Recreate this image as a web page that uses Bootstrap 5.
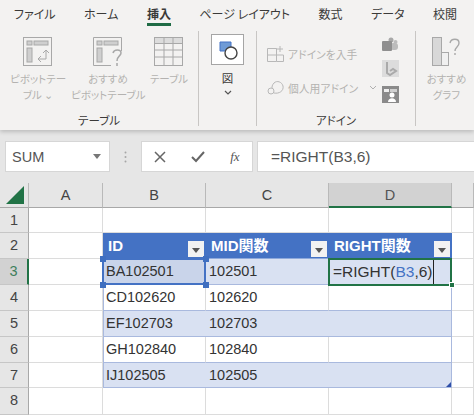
<!DOCTYPE html>
<html lang="ja">
<head>
<meta charset="utf-8">
<title>Excel</title>
<link rel="stylesheet" href="https://cdn.jsdelivr.net/npm/bootstrap@5.3.0/dist/css/bootstrap.min.css">
<style>
html,body{width:474px;height:415px;overflow:hidden;margin:0;background:#fff;}
body{font-family:"Liberation Sans","Noto Sans CJK JP",sans-serif;color:#333;}
.jp{font-family:"Noto Sans CJK JP",sans-serif;font-feature-settings:"palt";}
.ribbon{height:130px;background:#f3f2f1;box-shadow:0 2px 4px rgba(0,0,0,.18);position:relative;}
.tabs{height:27px;padding-left:14px;gap:28.5px;font-size:12px;color:#3b3a39;line-height:27px;white-space:nowrap;}
.tab-on{font-weight:700;position:relative;}
.tab-on::after{content:"";position:absolute;left:0;right:0;top:23px;height:3px;background:#1f6b45;}
.groups{height:103px;padding-top:4px;}
.rgroup{height:95px;border-right:1px solid #c8c6c4;position:relative;}
.g1{width:199px;}.g2{width:58px;}.g3{width:159px;}.g4{flex:1;border-right:0;}
.glabel{position:absolute;left:0;right:0;top:81px;text-align:center;font-size:11.5px;line-height:16px;color:#3b3a39;}
.bigbtn{position:absolute;top:6px;text-align:center;font-size:10.5px;line-height:16px;color:#b4b2b0;white-space:nowrap;}
.bigbtn svg{display:block;margin:0 auto 4px;}
.b1{left:3px;width:70px;}.b2{left:71px;width:74px;}.b3{left:141px;width:56px;}
.shapebox{position:absolute;left:12px;top:3px;width:33px;height:31px;background:#fff;border:1px solid #a5a5a5;}
.zu{position:absolute;left:12px;width:33px;top:39px;text-align:center;font-size:11.5px;line-height:16px;color:#3b3a39;}
.chev{position:absolute;left:25px;top:59px;}
.addrow{position:absolute;left:10px;font-size:10.8px;line-height:16px;color:#b4b2b0;white-space:nowrap;gap:3px;}
.addrow svg{flex:none;}
.ar1{top:14px;}.ar2{top:48px;}
.mini{position:absolute;left:125px;}
.m1{top:6px;}.m2{top:29px;}.m3{top:55px;}
.chart{position:absolute;left:2.5px;top:6px;width:56px;text-align:center;font-size:10.5px;line-height:16px;color:#b4b2b0;}
.chart svg{display:block;margin:0 0 4px 6px;}
.fbar{height:53px;background:#e6e6e6;padding:11px 0 0 5px;align-items:flex-start;}
.namebox{width:105px;height:31px;background:#fff;border:1px solid #d6d6d6;font-size:14.5px;color:#555;line-height:31px;padding-left:6px;position:relative;}
.namebox::after{content:"";position:absolute;right:8px;top:12px;border:4.5px solid transparent;border-top:5px solid #777;}
.dots{width:31px;height:31px;padding-left:14px;padding-top:10px;}
.fbtns{width:112px;height:31px;background:#fff;border:1px solid #d6d6d6;color:#666;font-size:15px;}
.fbtns span,.fbtns svg{flex:none;}
.fx{font-family:"Liberation Serif",serif;font-style:italic;font-size:13px;color:#555;}
.finput{width:217px;height:31px;margin-left:4px;background:#fff;border:1px solid #d6d6d6;border-right:0;font-size:15.5px;line-height:29px;padding-left:13px;color:#555;}
.sheet{display:grid;grid-template-columns:29px 74px 103px 123px 123px 22px;grid-template-rows:25px 25px 26px 26px 26px 26px 26px 25px 27px;position:relative;font-size:14.5px;line-height:25px;}
.sheet>div{border-right:1px solid #dcdcdc;border-bottom:1px solid #dcdcdc;padding-left:3px;white-space:nowrap;overflow:hidden;min-width:0;}
.sheet>.ch{background:#e6e6e6;border-right:1px solid #b9b9b9;border-bottom:1px solid #a8a8a8;text-align:center;padding:0;color:#444;line-height:24px;}
.sheet>.rh{background:#e6e6e6;border-right:1px solid #a8a8a8;border-bottom:1px solid #c6c6c6;text-align:center;padding:0;color:#444;}
.sheet>.corner{position:relative;}
.corner::after{content:"";position:absolute;right:4px;bottom:3px;border-style:solid;border-width:0 0 18px 18px;border-color:transparent transparent #217346 transparent;}
.sheet>.chsel{background:#d2d2d2;color:#555;border-bottom:2px solid #217346;}
.sheet>.rhsel{background:#d2d2d2;color:#3f7f5c;border-right:2px solid #217346;}
.sheet>.th{background:#4472c4;color:#fff;font-weight:700;border:0;border-bottom:1px solid #8ea9db;position:relative;padding-left:5px;font-size:15px;}
.sheet>.th::before{content:"";position:absolute;right:2px;top:8px;width:16px;height:16px;background:#f2f2f2;}
.sheet>.th::after{content:"";position:absolute;right:6px;top:15px;border:4px solid transparent;border-top:5px solid #555;}
.sheet>.band{background:#d9e1f2;border-right:0;border-bottom:1px solid #a9b9de;}
.sheet>.plain{border-bottom:1px solid #a9b9de;}
.sheet>.tl{box-shadow:inset 1px 0 0 #a9b9de;}
.sheet>.tr{box-shadow:inset -1px 0 0 #a9b9de;border-right:0;}
.sheet>.seln{background:#c9d4ea;}
.refbox{position:absolute;left:102px;top:75px;width:104px;height:27px;border:2px solid #4472c4;}
.hnd{position:absolute;width:6px;height:6px;background:#3f6fc0;border:0;}
.h1{left:100px;top:73px;}.h2{left:203px;top:73px;}.h3{left:100px;top:99px;}.h4{left:203px;top:99px;}
.editbox{position:absolute;left:328px;top:75px;width:124px;height:28px;border:2px solid #217346;background:#d9e1f2;font-size:15.5px;line-height:24px;padding-left:3px;color:#333;}
.caret-line{position:absolute;left:103px;top:0;bottom:0;width:1px;background:#222;}
.ref{color:#4472c4;}
.fill{position:absolute;left:449px;top:99px;width:6px;height:6px;background:#217346;border:1px solid #fff;}
.resize{position:absolute;left:446px;top:199px;border-style:solid;border-width:0 0 5px 5px;border-color:transparent transparent #2f4fa8 transparent;}
</style>
</head>
<body>
<header class="ribbon">
  <nav class="tabs d-flex jp">
    <span>ファイル</span><span>ホーム</span><span class="tab-on">挿入</span><span>ページ レイアウト</span><span>数式</span><span>データ</span><span>校閲</span>
  </nav>
  <div class="groups d-flex jp">
    <section class="rgroup g1">
      <div class="bigbtn b1">
        <svg width="30" height="30" viewBox="0 0 30 30" fill="none" stroke="#a8a8a8"><rect x=".5" y=".5" width="28" height="28"/><rect x="4" y="4" width="5" height="4" fill="#cfcfcf"/><rect x="11" y="4" width="14" height="4" fill="#cfcfcf"/><rect x="4" y="11" width="5" height="14" fill="#cfcfcf"/><path d="M15 22h8v-9m-3 3 3-3 3 3M15 22l3-3m-3 3 3 3"/></svg>
        ピボットテー<br>ブル ⌄
      </div>
      <div class="bigbtn b2">
        <svg width="31" height="30" viewBox="0 0 31 30" fill="none" stroke="#a8a8a8"><path d="M18 28.5H.5V.5h28V14"/><rect x="4" y="4" width="5" height="4" fill="#cfcfcf"/><rect x="11" y="4" width="14" height="4" fill="#cfcfcf"/><rect x="4" y="11" width="5" height="14" fill="#cfcfcf"/><path d="M20 16c1-4 8-4 8 0 0 3-4 3-4 8m0 2v3" stroke-width="1.5"/></svg>
        おすすめ<br>ピボットテーブル
      </div>
      <div class="bigbtn b3">
        <svg width="30" height="30" viewBox="0 0 30 30" fill="none" stroke="#a8a8a8"><rect x=".5" y=".5" width="28" height="28"/><rect x=".5" y=".5" width="28" height="6" fill="#dcdcdc"/><path d="M10 .5v28M19 .5v28M.5 13h28M.5 20h28"/></svg>
        テーブル
      </div>
      <div class="glabel">テーブル</div>
    </section>
    <section class="rgroup g2">
      <div class="shapebox">
        <svg width="31" height="29" viewBox="0 0 31 29"><path d="M8 7h11v9H8z" fill="#6f9bd6" stroke="#4472c4"/><circle cx="19" cy="18" r="6" fill="#fff" stroke="#444" stroke-width="1.4"/></svg>
      </div>
      <div class="zu">図</div>
      <svg class="chev" width="8" height="6" viewBox="0 0 8 6" fill="none" stroke="#555" stroke-width="1.2"><path d="M1 1l3 3 3-3"/></svg>
    </section>
    <section class="rgroup g3">
      <div class="addrow ar1 d-flex align-items-center">
        <svg width="18" height="17" viewBox="0 0 18 17" fill="none" stroke="#b8b8b8"><path d="M.5 3.500h9v13h-9zM.5 10h16v6.500h-7M9.500 3.500V10M13 1v6M10 4h6"/></svg>
        <span>アドインを入手</span>
      </div>
      <div class="addrow ar2 d-flex align-items-center">
        <svg width="18" height="17" viewBox="0 0 18 17" fill="none" stroke="#b8b8b8"><circle cx="4" cy="12" r="3"/><path d="M7 14c5 1 10-2 9-7-1-4-6-6-9-3-2 2-2 4-2 5"/></svg>
        <span>個人用アドイン</span>
        <svg class="ms-2" width="8" height="6" viewBox="0 0 8 6" fill="none" stroke="#b0b0b0"><path d="M1 1l3 3 3-3"/></svg>
      </div>
      <svg class="mini m1" width="16" height="15" viewBox="0 0 16 15"><circle cx="9" cy="3" r="2.500" fill="#a8a8a8"/><circle cx="13.500" cy="5" r="2" fill="#bcbcbc"/><rect x="8" y="6" width="8" height="7" rx="3" fill="#bcbcbc"/><rect x="0" y="4" width="10" height="10" rx="1" fill="#8f8f8f"/></svg>
      <svg class="mini m2" width="17" height="17" viewBox="0 0 17 17"><rect width="17" height="17" fill="#dcdcdc"/><path d="M5 2v11l3 2 6-4-3-2-3 2" fill="none" stroke="#aaa" stroke-width="2"/></svg>
      <svg class="mini m3" width="17" height="17" viewBox="0 0 17 17"><rect width="17" height="17" fill="#8a8a8a"/><rect x="2" y="3" width="5" height="3" fill="#eee"/><rect x="8" y="3" width="7" height="3" fill="#d0d0d0"/><circle cx="10" cy="9" r="2.500" fill="#fff"/><path d="M6 16c0-5 8-5 8 0z" fill="#fff"/></svg>
      <div class="glabel">アドイン</div>
    </section>
    <section class="rgroup g4">
      <div class="chart">
        <svg width="38" height="30" viewBox="0 0 38 30" fill="none" stroke="#a8a8a8"><rect x="7.500" y=".5" width="9" height="28" fill="#d8d8d8"/><rect x="16.500" y="15.500" width="7" height="13" fill="#f0f0f0"/><path d="M25 6c1-5 9-5 9 0 0 4-4 4-4 8m0 2v2" stroke-width="1.400"/></svg>
        おすすめ<br>グラフ
      </div>
    </section>
  </div>
</header>
<div class="fbar d-flex">
  <div class="namebox">SUM</div>
  <div class="dots">
    <svg class="d-block" width="3" height="12" viewBox="0 0 3 12" fill="#a6a6a6"><circle cx="1.500" cy="1.500" r="1"/><circle cx="1.500" cy="6" r="1"/><circle cx="1.500" cy="10.500" r="1"/></svg>
  </div>
  <div class="fbtns d-flex align-items-center justify-content-around">
    <svg width="12" height="12" viewBox="0 0 12 12" fill="none" stroke="#666" stroke-width="1.500"><path d="M1 1l10 10M11 1 1 11"/></svg>
    <svg width="14" height="12" viewBox="0 0 14 12" fill="none" stroke="#666" stroke-width="2"><path d="M1 6l4 4 8-9"/></svg>
    <span class="fx">fx</span>
  </div>
  <div class="finput">=RIGHT(B3,6)</div>
</div>
<main class="sheet">
  <div class="ch corner"></div><div class="ch">A</div><div class="ch">B</div><div class="ch">C</div><div class="ch chsel">D</div><div class="ch"></div>

  <div class="rh">1</div><div></div><div></div><div></div><div></div><div></div>

  <div class="rh">2</div><div></div><div class="th">ID</div><div class="th">MID関数</div><div class="th">RIGHT関数</div><div></div>

  <div class="rh rhsel">3</div><div></div><div class="band tl seln">BA102501</div><div class="band">102501</div><div class="band tr"></div><div></div>

  <div class="rh">4</div><div></div><div class="plain tl">CD102620</div><div class="plain">102620</div><div class="plain tr"></div><div></div>

  <div class="rh">5</div><div></div><div class="band tl">EF102703</div><div class="band">102703</div><div class="band tr"></div><div></div>

  <div class="rh">6</div><div></div><div class="plain tl">GH102840</div><div class="plain">102840</div><div class="plain tr"></div><div></div>

  <div class="rh">7</div><div></div><div class="band tl">IJ102505</div><div class="band">102505</div><div class="band tr"></div><div></div>

  <div class="rh">8</div><div></div><div></div><div></div><div></div><div></div>

  <span class="refbox"></span>
  <span class="hnd h1"></span><span class="hnd h2"></span><span class="hnd h3"></span><span class="hnd h4"></span>
  <span class="editbox">=RIGHT(<span class="ref">B3</span>,6)<span class="caret-line"></span></span>
  <span class="fill"></span>
  <span class="resize"></span>
</main>
<script src="https://cdn.jsdelivr.net/npm/bootstrap@5.3.0/dist/js/bootstrap.bundle.min.js"></script>
</body>
</html>
